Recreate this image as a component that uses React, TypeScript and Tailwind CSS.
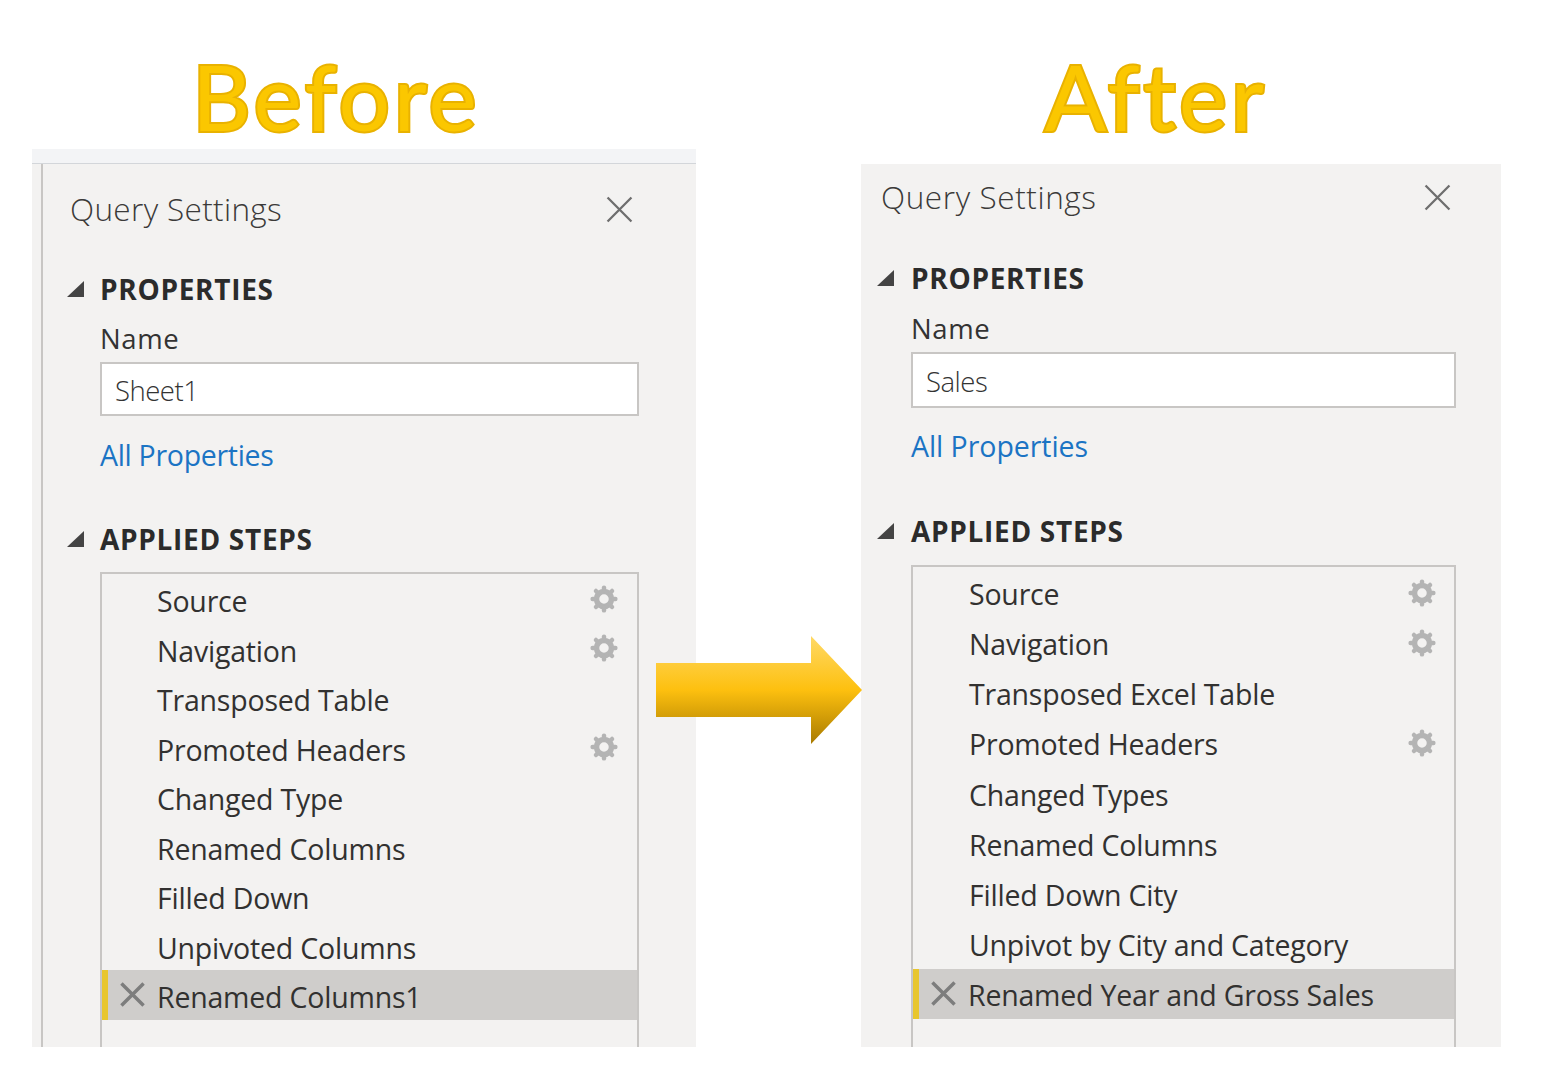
const uiFont = "font-['Open_Sans',sans-serif]";

interface PanelStyle {
  title: string;
  titleText: string;
  head: string;
  gapProps: string;
  gapName: string;
  inset: string;
  input: string;
  link: string;
  linkText: string;
  gapSteps: string;
  row: string;
  list: string;
  gear: string;
  text: string;
  textNudge: string;
}

const beforeStyle: PanelStyle = {
  title: "h-[90px] pl-[27px] pr-[63px]",
  titleText: "tracking-[0.35px]",
  head: "pl-[24px] gap-[16px]",
  gapProps: "mt-[15px]",
  gapName: "mt-[10px]",
  inset: "ml-[57px] mr-[57px]",
  input: "h-[54px] pl-[13px]",
  link: "h-[40px] mt-[19px]",
  linkText: "tracking-[-0.3px]",
  gapSteps: "mt-[44px]",
  row: "h-[49.5px]",
  list: "mt-[13px]",
  gear: "right-[19px]",
  text: "pl-[55px]",
  textNudge: "pt-[6px]",
};

const afterStyle: PanelStyle = {
  title: "h-[66px] pl-[20px] pr-[50px]",
  titleText: "tracking-[0.6px]",
  head: "pl-[16px] gap-[17px]",
  gapProps: "mt-[28px]",
  gapName: "mt-[11px]",
  inset: "ml-[50px] mr-[45px]",
  input: "h-[56px] pl-[13px]",
  link: "h-[40px] mt-[18px]",
  linkText: "tracking-[-0.05px]",
  gapSteps: "mt-[45px]",
  row: "h-[50.1px]",
  list: "mt-[14px] pt-[1px]",
  gear: "right-[18px]",
  text: "pl-[56px]",
  textNudge: "pt-[3px]",
};

function Gear({ className }: { className?: string }) {
  const angles = [0, 45, 90, 135, 180, 225, 270, 315];
  return (
    <svg viewBox="0 0 28 28" className={className} width="28" height="28">
      <circle cx="14" cy="14" r="7.5" fill="none" stroke="#b4b4b4" strokeWidth="5.5" />
      {angles.map((a) => (
        <line key={a} x1="14" y1="5" x2="14" y2="2.6" stroke="#b4b4b4" strokeWidth="4.4" strokeLinecap="round" transform={`rotate(${a} 14 14)`} />
      ))}
    </svg>
  );
}

function Cross({ size, color, width }: { size: number; color: string; width: number }) {
  return (
    <svg viewBox="0 0 26 26" width={size} height={size}>
      <path d="M1.5 1.5 L24.5 24.5 M24.5 1.5 L1.5 24.5" stroke={color} strokeWidth={width} fill="none" />
    </svg>
  );
}

function SectionHead({ label, className }: { label: string; className: string }) {
  return (
    <div className={`flex h-[40px] items-center ${className}`}>
      <svg viewBox="0 0 17 16" width="17" height="16" className="shrink-0">
        <path d="M17 0 V16 H0 Z" fill="#444444" />
      </svg>
      <span className="text-[28px] font-bold tracking-[0.7px] text-[#2b2b2b]">{label}</span>
    </div>
  );
}

interface Step {
  name: string;
  gear?: boolean;
}

function Panel({ s, name, steps, lastStep }: { s: PanelStyle; name: string; steps: Step[]; lastStep: string }) {
  return (
    <div className={`flex h-full flex-col overflow-hidden bg-[#f3f2f1] ${uiFont}`}>
      <div className={`flex shrink-0 items-center justify-between ${s.title}`}>
        <span className={`text-[31.5px] font-light text-[#3b3a39] ${s.titleText}`}>Query Settings</span>
        <Cross size={27} color="#6e6e6e" width={2.2} />
      </div>
      <SectionHead label="PROPERTIES" className={`${s.head} ${s.gapProps}`} />
      <div className={`${s.head} ${s.gapName} flex h-[40px] items-center`}>
        <span className="w-[17px]" />
        <span className="text-[27.5px] tracking-[0.6px] text-[#333333]">Name</span>
      </div>
      <div className={`mt-[3px] flex shrink-0 items-center border-2 border-[#c8c6c4] bg-white pt-[4px] text-[27.5px] font-light tracking-[-0.5px] text-[#333333] ${s.inset} ${s.input}`}>
        {name}
      </div>
      <div className={`${s.head} flex items-center ${s.link}`}>
        <span className="w-[17px]" />
        <span className={`text-[28.5px] text-[#1b74c4] ${s.linkText}`}>All Properties</span>
      </div>
      <SectionHead label="APPLIED STEPS" className={`${s.head} ${s.gapSteps}`} />
      <div className={`flex-1 border-x-2 border-t-2 border-[#c8c6c4] ${s.inset} ${s.list}`}>
        {steps.map((step) => (
          <div key={step.name} className={`relative flex items-center text-[28.5px] tracking-[-0.2px] text-[#323130] ${s.row} ${s.text} ${s.textNudge}`}>
            {step.name}
            {step.gear && <Gear className={`absolute top-1/2 -translate-y-1/2 ${s.gear}`} />}
          </div>
        ))}
        <div className={`flex items-center border-l-[6px] border-[#e8c62e] bg-[#cfcdcb] text-[28.5px] tracking-[-0.2px] text-[#323130] ${s.row}`}>
          <span className="flex w-[49px] shrink-0 justify-center">
            <Cross size={25} color="#7d7d7d" width={3.6} />
          </span>
          <span className={s.textNudge}>{lastStep}</span>
        </div>
      </div>
    </div>
  );
}

function Heading({ children }: { children: string }) {
  return (
    <div className="flex justify-center font-['Lato',sans-serif] text-[91px] leading-none font-normal tracking-[3.5px] text-[#fbc700] [-webkit-text-stroke:4px_#e9b200] [paint-order:stroke_fill]">
      {children}
    </div>
  );
}

export default function App() {
  return (
    <div className="relative flex h-[1084px] w-[1550px] overflow-hidden bg-white">
      {/* BEFORE */}
      <div className="ml-[32px] flex h-[1047px] w-[664px] flex-col">
        <div className="h-[149px] shrink-0 pt-[50px] pr-[120px] pl-[64px]">
          <Heading>Before</Heading>
        </div>
        <div className="h-[15px] shrink-0 border-b border-[#d3d6da] bg-[#f3f4f6]" />
        <div className="flex min-h-0 flex-1 bg-[#f3f2f1]">
          <div className="w-[9px] shrink-0" />
          <div className="min-w-0 flex-1 border-l-2 border-[#c8c6c4]">
            <Panel
              s={beforeStyle}
              name="Sheet1"
              steps={[
                { name: "Source", gear: true },
                { name: "Navigation", gear: true },
                { name: "Transposed Table" },
                { name: "Promoted Headers", gear: true },
                { name: "Changed Type" },
                { name: "Renamed Columns" },
                { name: "Filled Down" },
                { name: "Unpivoted Columns" },
              ]}
              lastStep="Renamed Columns1"
            />
          </div>
        </div>
      </div>

      {/* AFTER */}
      <div className="ml-[165px] flex h-[1047px] w-[640px] flex-col">
        <div className="h-[164px] shrink-0 pt-[50px] pr-[50px]">
          <Heading>After</Heading>
        </div>
        <div className="min-h-0 flex-1">
          <Panel
            s={afterStyle}
            name="Sales"
            steps={[
              { name: "Source", gear: true },
              { name: "Navigation", gear: true },
              { name: "Transposed Excel Table" },
              { name: "Promoted Headers", gear: true },
              { name: "Changed Types" },
              { name: "Renamed Columns" },
              { name: "Filled Down City" },
              { name: "Unpivot by City and Category" },
            ]}
            lastStep="Renamed Year and Gross Sales"
          />
        </div>
      </div>

      {/* arrow sits across the gap and over the left panel */}
      <svg viewBox="0 0 206 108" width="206" height="108" className="absolute top-[636px] left-[656px]">
        <defs>
          <linearGradient id="arrowFill" x1="0" y1="0" x2="0" y2="1">
            <stop offset="0" stopColor="#ffd966" />
            <stop offset="0.5" stopColor="#fdc00f" />
            <stop offset="1" stopColor="#a87a00" />
          </linearGradient>
        </defs>
        <path d="M0 27 H155 V0 L206 54 L155 108 V81 H0 Z" fill="url(#arrowFill)" />
      </svg>
    </div>
  );
}
